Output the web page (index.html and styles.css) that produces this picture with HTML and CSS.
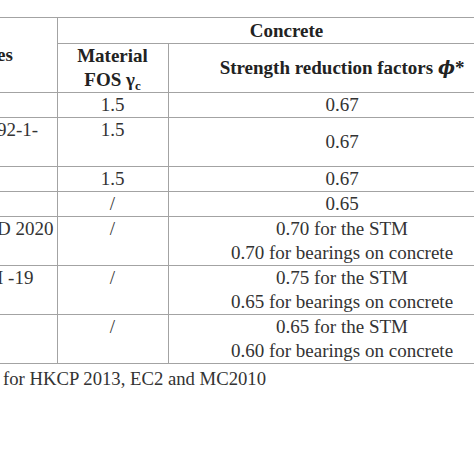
FILE: index.html
```html
<!DOCTYPE html>
<html>
<head>
<meta charset="utf-8">
<link rel="stylesheet" href="styles.css">
</head>
<body>
<div class="page">
<table class="tbl">
  <colgroup>
    <col class="c1">
    <col class="c2">
    <col class="c3">
  </colgroup>
  <thead>
    <tr class="h1">
      <th class="hd" rowspan="2">es</th>
      <th colspan="2" class="concrete">Concrete</th>
    </tr>
    <tr class="h2">
      <th class="mat">Material<br>FOS <span class="gam">γ<sub>c</sub></span></th>
      <th class="srf">Strength reduction factors <span class="phi">ϕ</span>*</th>
    </tr>
  </thead>
  <tbody>
    <tr>
      <td class="code"></td>
      <td class="fos">1.5</td>
      <td class="val">0.67</td>
    </tr>
    <tr class="tall">
      <td class="code">92-1-</td>
      <td class="fos">1.5</td>
      <td class="val">0.67</td>
    </tr>
    <tr>
      <td class="code"></td>
      <td class="fos">1.5</td>
      <td class="val">0.67</td>
    </tr>
    <tr>
      <td class="code"></td>
      <td class="fos">/</td>
      <td class="val">0.65</td>
    </tr>
    <tr>
      <td class="code">D 2020</td>
      <td class="fos">/</td>
      <td class="val">0.70 for the STM<br>0.70 for bearings on concrete</td>
    </tr>
    <tr>
      <td class="code">I -19</td>
      <td class="fos">/</td>
      <td class="val">0.75 for the STM<br>0.65 for bearings on concrete</td>
    </tr>
    <tr>
      <td class="code"></td>
      <td class="fos">/</td>
      <td class="val">0.65 for the STM<br>0.60 for bearings on concrete</td>
    </tr>
  </tbody>
</table>
<p class="note">for HKCP 2013, EC2 and MC2010</p>
</div>
</body>
</html>
```

FILE: styles.css
```css
html, body {
  margin: 0;
  padding: 0;
  overflow: hidden;
  background: #ffffff;
}

.page {
  padding-top: 17px;
  width: 474px;
  overflow: hidden;
  font-family: "Liberation Serif", "Times New Roman", serif;
  color: #333333;
}

.tbl {
  border-collapse: collapse;
  table-layout: fixed;
  width: 519px;
  margin-left: -3px;
  font-size: 19px;
  line-height: 24px;
}

.c1 { width: 60px; }
.c2 { width: 111px; }
.c3 { width: 348px; }

.tbl th,
.tbl td {
  border: 1px solid #a3a3a3;
  padding: 0;
  white-space: nowrap;
  overflow: hidden;
}

.tbl th {
  font-weight: bold;
  color: #222222;
}

.tbl tr > :first-child {
  border-left: none;
}

.h1 th {
  height: 25px;
}

.concrete {
  text-align: center;
  vertical-align: middle;
}

.hd {
  text-align: left;
  vertical-align: middle;
  padding-left: 3px;
}

.mat {
  text-align: center;
  vertical-align: top;
}

.srf {
  text-align: center;
  vertical-align: middle;
}

.gam sub {
  font-size: 13px;
  vertical-align: -4px;
  line-height: 0;
}

.phi {
  font-family: "DejaVu Serif", serif;
  font-style: italic;
  font-size: 18px;
}

.tbl td {
  height: 24px;
}

.tall td {
  height: 48px;
}

.code {
  text-align: left;
  vertical-align: top;
}

.fos {
  text-align: center;
  vertical-align: top;
}

.val {
  text-align: center;
  vertical-align: middle;
}

.note {
  margin: 0;
  padding-top: 3px;
  padding-left: 3px;
  font-size: 18.7px;
  line-height: 24px;
  color: #333333;
}
```
